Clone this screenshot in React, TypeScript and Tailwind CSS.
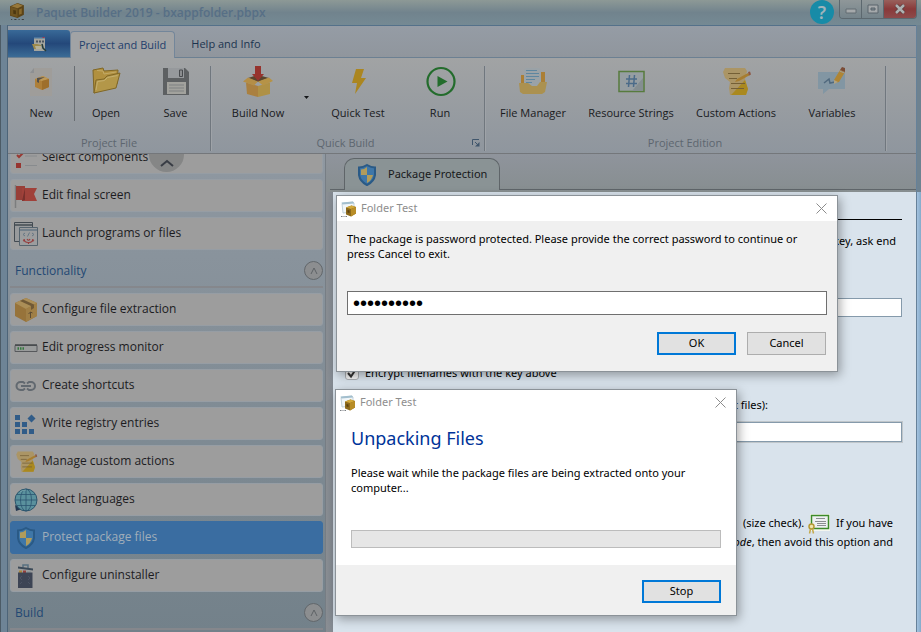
import type { ReactNode } from "react";
import { useState } from "react";

interface IconProps {
  className?: string;
}

function BoxLogo({ className }: IconProps) {
  return (
    <svg viewBox="0 0 16 16" className={className} aria-hidden="true">
      <path d="m1 3 7-3 6 2v9l-6 3-7-2z" fill="#5c4417" />
      <path d="M1.500 3.500 8 5.500v8l-6.500-2z" fill="#6f5420" />
      <path d="m2 3 6-2.500L13 2.500 8 5z" fill="#97783a" />
      <path d="M4 6.500 6.500 7v3.500L4 10z" fill="#4c3812" />
      <path d="M9.500 6 12 5v5l-2.500 1z" fill="#8a6a2c" />
      <path d="M2 15.500h1M5 15.500h2M9 15.500h1M12 15.500h2" stroke="#3c3f42" />
    </svg>
  );
}

function SetupLogo({ className }: IconProps) {
  return (
    <svg viewBox="0 0 16 16" className={className} aria-hidden="true">
      <path d="M1 2.500 12 1l1 1v9L2 12z" fill="#f1f6f9" stroke="#b4c6d0" strokeWidth=".8" />
      <path d="M.5 1.500 12 .6l1 1.800L1.500 3.500z" fill="#a3bfce" />
      <path d="m5 6.500 5.500-2 4.500 1.500v6.500l-5 3-5-2z" fill="#8d6a1c" />
      <path d="m5 6.500 5.500-2L15 6l-5 2z" fill="#d2a83a" />
      <path d="M10 8 15 6v6.500l-5 3z" fill="#b88d27" />
      <path d="m6.500 9 2 .5v2.500l-2-.5z" fill="#5c4210" />
      <path d="M0 15.500h1.500M2.500 15.500h1M4.500 15.500h1.500" stroke="#7a7f84" />
    </svg>
  );
}

function AppMenuIcon() {
  return (
    <svg viewBox="0 0 16 16" className="h-4 w-4" aria-hidden="true">
      <path d="M3 1h11v14H3z" fill="#a5a59e" />
      <path d="M3 1h11v1.500H3z" fill="#47729c" />
      <path d="M11.500 1.500h2" stroke="#a34" />
      <path d="M5 4.500h2v2H5zM8 4.500h2v2H8zM11 4.500h2v2h-2z" fill="#4b5560" />
      <path d="M1 8h5l4 1v4H3z" fill="#9d8a4b" />
      <path d="M4 10h6v3H5z" fill="#b5b096" />
      <path d="m11 8 1 4 3 3" stroke="#243b38" strokeWidth="1.500" fill="none" />
    </svg>
  );
}

function NewIcon() {
  return (
    <svg viewBox="0 0 32 32" className="h-8 w-8" aria-hidden="true">
      <path d="M9 2h18v28H5V7z" fill="#9f9d9a" />
      <path d="M5 7l4-5v5z" fill="#8d8f92" />
      <path d="m10 13 8-3 6 3v8l-7 3-7-3z" fill="#ae7f38" />
      <path d="m10 13 8-3 6 3-7 2z" fill="#bd9857" />
      <path d="m17 15 7-2v8l-7 3z" fill="#9e6f2c" />
      <path d="m12 12 8-1-6 3v3l-2-1z" fill="#55504a" />
    </svg>
  );
}

function OpenIcon() {
  return (
    <svg viewBox="0 0 32 32" className="h-8 w-8" aria-hidden="true">
      <path d="M3 4 13 2l1 3 14-1-1 14L4 27z" fill="#b1903f" stroke="#806726" />
      <path d="M7 4.500 13 5l1 3 12-2" stroke="#c3aa66" fill="none" />
      <path d="M4 27 6 14l8-1 3-3 13-3-4 15z" fill="#b39749" stroke="#806726" />
      <path d="M6 24 7.500 15.500l7-1 3-3 10-2" stroke="#c5af6e" fill="none" />
    </svg>
  );
}

function SaveIcon() {
  return (
    <svg viewBox="0 0 32 32" className="h-8 w-8" aria-hidden="true">
      <path d="M3 2h22l4 4v23H3z" fill="#5d6062" />
      <path d="M8 2h16v10H8z" fill="#96999c" />
      <path d="M19.500 4h3v6.500h-3z" fill="#8a8c8e" stroke="#484b4e" />
      <path d="M7 16h19v12H7z" fill="#a2a29d" />
      <path d="M9 19h15M9 22h15M9 25h15" stroke="#7f8182" />
    </svg>
  );
}

function BuildIcon() {
  return (
    <svg viewBox="0 0 32 32" className="h-8 w-8" aria-hidden="true">
      <path d="m6 12 10-3 11 3-11 4z" fill="#59452d" />
      <path d="M4 16.500 16 20v11L5 28z" fill="#aa8040" />
      <path d="m16 20 12-3.500V28l-12 3z" fill="#af9146" />
      <path d="m6 11.500-5 4 11 4 4-4z" fill="#b48e47" />
      <path d="m27 11.500 4 3.500-10 4.500-5-4z" fill="#b69347" />
      <path d="M13 0h6v8h3l-6 7-6-7h3z" fill="#96332d" />
    </svg>
  );
}

function BoltIcon() {
  return (
    <svg viewBox="0 0 32 32" className="h-8 w-8" aria-hidden="true">
      <path d="M14 3h8l-3 9h5L13 28l2-11H10z" fill="#ab8620" />
    </svg>
  );
}

function RunIcon() {
  return (
    <svg viewBox="0 0 32 32" className="h-8 w-8" aria-hidden="true">
      <circle cx="17" cy="15.500" r="13.500" fill="none" stroke="#236c2c" strokeWidth="2.200" />
      <path d="m13.500 10 10 5.500-10 5.500z" fill="#236c2c" />
    </svg>
  );
}

function FileManagerIcon() {
  return (
    <svg viewBox="0 0 32 32" className="h-8 w-8" aria-hidden="true">
      <path d="M4 9h5v10H4zM24 6h4v12h-4z" fill="#ab7f36" />
      <path d="M9 2h13l2 2v16H7V4z" fill="#9aa2a7" />
      <path d="M9 4.500h11M9 7.500h13M9 10.500h13M9 13.500h9M9 16.500h6" stroke="#5d86a0" />
      <path d="M2 17h9l4 3h5l3-4h7l-2 10-3 2H6l-3-2z" fill="#ab9150" />
    </svg>
  );
}

function StringsIcon() {
  return (
    <svg viewBox="0 0 32 32" className="h-8 w-8" aria-hidden="true">
      <path d="M4 5.500h25v20H4z" fill="#969ea2" stroke="#577b3e" strokeWidth="1.500" />
      <path d="M28 12v13H17z" fill="#858e91" />
      <path d="m14.500 9-1 12M19.500 9l-1 12M11 13h11M11 17.500h11" stroke="#4b6b89" strokeWidth="1.500" />
    </svg>
  );
}

function ScrollIcon({ className = "h-8 w-8" }: IconProps) {
  return (
    <svg viewBox="0 0 32 32" className={className} aria-hidden="true">
      <path d="M5 2h20l2 3-2 8 3 10-2 6H10l-1-7 1-6-5-4-2-6z" fill="#ab9565" />
      <path d="m25 14 3 9-2 6H11l2-2z" fill="#aa891f" />
      <path d="M8 7.500h12M9 12.500h8M11 17.500h14M11 22.500h13" stroke="#745f35" />
      <path d="m15 16 2-3 11-6 2 2-11 6z" fill="#a77d30" />
      <path d="m28 6 2-.5 1 3-2 1z" fill="#8d5642" />
    </svg>
  );
}

function VariablesIcon() {
  return (
    <svg viewBox="0 0 32 32" className="h-8 w-8" aria-hidden="true">
      <path d="M2 6h27v17H13l-6 5v-5H2z" fill="#8296a3" />
      <path d="m8 17 5-4 1 4 5-1" stroke="#50697e" strokeWidth="1.500" fill="none" />
      <path d="m18 14 6-10 5 2-6 10-5 1z" fill="#ae8535" />
      <path d="m24 4 2-3 3 1v4z" fill="#7b4c36" />
      <path d="m23.500 5 5 2" stroke="#9e9e9d" />
      <path d="m18 14 4 2-4 2z" fill="#b0a383" />
    </svg>
  );
}

function ComponentsIcon() {
  return (
    <svg viewBox="0 0 24 24" className="h-6 w-6" aria-hidden="true">
      <path d="m3 9 2 2 4-4" stroke="#993832" strokeWidth="2" fill="none" />
      <path d="M2 17h5v5H2z" fill="#973530" />
      <path d="M11 10h12M11 19.500h12" stroke="#888b8e" />
    </svg>
  );
}

function FlagIcon() {
  return (
    <svg viewBox="0 0 24 24" className="h-6 w-6" aria-hidden="true">
      <path d="M1.500 1v23" stroke="#7c7d7e" strokeWidth="1.500" />
      <path d="M2 2h9v14H2z" fill="#983f38" />
      <path d="M8 4h15l-3 6 3 7H8z" fill="#a0413a" />
      <path d="m8 17 3-1V4z" fill="#79302c" />
    </svg>
  );
}

function LaunchIcon() {
  return (
    <svg viewBox="0 0 24 24" className="h-6 w-6" aria-hidden="true">
      <path d="M.5.5h18v19H.5z" fill="#989a9c" stroke="#434b52" />
      <path d="M1 3h17" stroke="#434b52" strokeWidth="1.500" />
      <path d="M5.500 5.500h18v18h-18z" fill="#9c9d9e" stroke="#56646e" />
      <path d="M6 8h17" stroke="#667784" strokeWidth="1.500" />
      <path d="m11 11-2 1.500 2 1.500m7-3 2 1.500-2 1.500m-4.500.5 2-4" stroke="#667784" fill="none" />
      <path d="M10 17q0 3.500 4.500 3.500T19 17m-6 0q1.500 2.500 3 0M9 19l2-1m9 1-2-1m-3.500 4v-2" stroke="#963d3d" strokeWidth="1.200" fill="none" />
    </svg>
  );
}

function PackageIcon() {
  return (
    <svg viewBox="0 0 24 24" className="h-6 w-6" aria-hidden="true">
      <path d="m1 5 11-5 11 5v13l-11 6-11-6z" fill="#97733a" />
      <path d="m1 5 11-5 11 5-11 6z" fill="#ab8e57" />
      <path d="m12 11 11-6v13l-11 6z" fill="#a07f46" />
      <path d="m6 3 11 5v4l3-2V6.500L9 1.500z" fill="#705936" />
      <path d="M16.500 20v-6m-2 2 2-2 2 1" stroke="#5c4c34" fill="none" />
    </svg>
  );
}

function ProgressIcon() {
  return (
    <svg viewBox="0 0 24 24" className="h-6 w-6" aria-hidden="true">
      <path d="M1 9.500h22v6H1z" fill="#999b9b" stroke="#57595c" />
      <path d="M1 9h22" stroke="#45484b" strokeWidth="1.500" />
      <path d="M3.500 12.500h1.500m1 0h1.500m1 0H10" stroke="#34793e" strokeWidth="2.500" />
    </svg>
  );
}

function LinkIcon() {
  return (
    <svg viewBox="0 0 24 24" className="h-6 w-6" aria-hidden="true">
      <path
        d="M11 9.500 9 8H6.500a4 4 0 0 0 0 8H9l2-1.500M13 9.500 15 8h2a4 4 0 0 1 0 8h-2l-2-1.500"
        fill="none"
        stroke="#626970"
        strokeWidth="2"
      />
      <path d="M7 12h10" stroke="#626970" strokeWidth="2" />
    </svg>
  );
}

function RegistryIcon() {
  return (
    <svg viewBox="0 0 24 24" className="h-6 w-6" aria-hidden="true">
      <path
        d="M1 3h5v5H1zM1 10h5v5H1zM8 10h5v5H8zM1 17h5v5H1zM8 17h5v5H8zM15 17h5v5h-5zM17.500 2.500l4 4-4 4-4-4z"
        fill="#315c88"
      />
    </svg>
  );
}

function GlobeIcon() {
  return (
    <svg viewBox="0 0 24 24" className="h-6 w-6" aria-hidden="true">
      <path d="m1 17 1 6 6-2z" fill="#23364f" />
      <circle cx="12" cy="12" r="11" fill="#5a919d" stroke="#2c566d" />
      <ellipse cx="12" cy="12" rx="5.500" ry="11" fill="none" stroke="#2b5470" strokeWidth=".8" />
      <path d="M1 12h22M12 1v22M3 6.500h18M3 17.500h18" stroke="#2b5470" strokeWidth=".8" />
      <path d="M6 4q3-2 6-2" stroke="#73a0a8" fill="none" />
    </svg>
  );
}

function ShieldIcon({ className = "h-6 w-6" }: IconProps) {
  return (
    <svg viewBox="0 0 24 24" className={className} aria-hidden="true">
      <path
        d="M12 2q4 2.500 8 2.500V12q-1 6.500-8 10Q5 18.500 4 12V4.500Q8 4.500 12 2z"
        fill="#3f77a8"
        stroke="#2a5a86"
        strokeWidth="2"
      />
      <path d="M12 4v8H6V6.500Q9 6.500 12 4zM12 12h6q-1 5-6 8z" fill="#b09c5c" />
    </svg>
  );
}

function TrashIcon() {
  return (
    <svg viewBox="0 0 24 24" className="h-6 w-6" aria-hidden="true">
      <path d="M9 3.500V1h5v3" stroke="#587080" strokeWidth="1.500" fill="none" />
      <path d="m4 2.500 15 2v2l-15-2z" fill="#3c4a58" />
      <path d="M5 6.500h3V9H5z" fill="#ab873c" />
      <path d="M9 6.500h3V9H9z" fill="#943e3c" />
      <path d="M13 7h4v2h-4z" fill="#8e9598" />
      <path d="M4 8.500h14.500V24H4z" fill="#3d4454" />
      <path d="m8 12-2 2 2 2m6-4 2 2-2 2m-6 2-2 2m8-2 2 2" stroke="#4c5363" fill="none" />
    </svg>
  );
}

function CertificateIcon() {
  return (
    <svg viewBox="0 0 24 20" className="-my-1 mx-px inline h-5 w-6 align-middle" aria-hidden="true">
      <path d="M2 0h20v17H2z" fill="#f4f6ef" />
      <path d="M3.500 1.500h17v13h-17z" fill="#eef0f2" stroke="#3c8a2a" strokeWidth="1.500" />
      <path d="M8 4.500h9M7 7.500h11M9 9.500h9M9 11.500h9" stroke="#8a8d90" />
      <circle cx="3.500" cy="12.500" r="2.500" fill="#f0e6b0" stroke="#b69a35" strokeWidth="1.500" />
      <path d="m2.500 15-1 4.500m3-4.500 1 4.500" stroke="#c4a94c" strokeWidth="1.500" />
    </svg>
  );
}

interface RibbonButtonProps {
  label: string;
  icon: ReactNode;
  className: string;
}

function RibbonButton({ label, icon, className }: RibbonButtonProps) {
  return (
    <button className={`flex flex-col items-center gap-[7px] whitespace-nowrap ${className}`}>
      {icon}
      <span className="leading-4">{label}</span>
    </button>
  );
}

interface RibbonGroupProps {
  title: string;
  launcher?: boolean;
  children: ReactNode;
}

function RibbonGroup({ title, launcher, children }: RibbonGroupProps) {
  return (
    <section className="mt-2 flex flex-col justify-between border-r border-[#70777e] shadow-[1px_0_#9fa3a8]">
      <div className="flex">{children}</div>
      <div className={`relative text-center leading-4 text-[#5d666f] ${launcher ? "pr-1" : ""}`}>
        {title}
        {launcher && (
          <button aria-label={`${title} options`} className="absolute right-1 bottom-1">
            <svg viewBox="0 0 8 8" className="h-2 w-2">
              <path d="M.5 6V.5H7M3 3l3 3" stroke="#40566c" fill="none" />
              <path d="M7.500 3v4.500H3z" fill="#40566c" />
            </svg>
          </button>
        )}
      </div>
    </section>
  );
}

interface NavItemProps {
  label: string;
  icon: ReactNode;
  active?: boolean;
}

function NavItem({ label, icon, active }: NavItemProps) {
  return (
    <li>
      <button
        className={`flex h-[33px] w-full items-center gap-1 rounded-[3px] border px-[3px] text-left ${
          active
            ? "border-[#3a6da1] bg-[#3a6da1] text-[#a0adb9]"
            : "border-[#969da4] bg-[#9d9d9d] text-[#1c1c1f]"
        }`}
      >
        {icon}
        <span className="pb-px">{label}</span>
      </button>
    </li>
  );
}

function NavHeading({ label }: { label: string }) {
  return (
    <div className="flex h-[33px] items-center justify-between border-b-2 border-[#85878c] pl-[5px]">
      <h2 className="text-[#234873]">{label}</h2>
      <button
        aria-label={`Collapse ${label}`}
        className="flex h-[19px] w-[19px] items-center justify-center rounded-full border border-[#62676b] bg-[#8c8e90]"
      >
        <svg viewBox="0 0 8 8" className="h-2 w-2">
          <path d="m1 7 3-6 3 6" stroke="#5e6266" fill="none" />
        </svg>
      </button>
    </div>
  );
}

const screenItems = [
  { label: "Select components", icon: <ComponentsIcon /> },
  { label: "Edit final screen", icon: <FlagIcon /> },
  { label: "Launch programs or files", icon: <LaunchIcon /> },
];

const functionalityItems = [
  { label: "Configure file extraction", icon: <PackageIcon /> },
  { label: "Edit progress monitor", icon: <ProgressIcon /> },
  { label: "Create shortcuts", icon: <LinkIcon /> },
  { label: "Write registry entries", icon: <RegistryIcon /> },
  { label: "Manage custom actions", icon: <ScrollIcon className="h-6 w-6" /> },
  { label: "Select languages", icon: <GlobeIcon /> },
  { label: "Protect package files", icon: <ShieldIcon />, active: true },
  { label: "Configure uninstaller", icon: <TrashIcon /> },
];

function Sidebar() {
  return (
    <nav className="relative w-[318px] shrink-0 overflow-hidden border-r border-[#777e85] bg-linear-to-b from-[#8f98a1] to-[#73818a] px-[2px] text-[12px]">
      <div className="-mt-[13px] flex flex-col gap-[5px]">
        <ul className="flex flex-col gap-[5px]">
          {screenItems.map((item) => (
            <NavItem key={item.label} {...item} />
          ))}
        </ul>
        <NavHeading label="Functionality" />
        <ul className="flex flex-col gap-[5px]">
          {functionalityItems.map((item) => (
            <NavItem key={item.label} {...item} />
          ))}
        </ul>
        <NavHeading label="Build" />
      </div>
      <button
        aria-label="Scroll up"
        className="absolute -top-[17px] left-[141px] flex h-[35px] w-[35px] items-end justify-center rounded-full bg-[#858686] pb-[5px]"
      >
        <svg viewBox="0 0 14 8" className="h-2 w-[14px]">
          <path d="m1 7 6-5 6 5" stroke="#393d45" strokeWidth="2" fill="none" />
        </svg>
      </button>
    </nav>
  );
}

interface DialogProps {
  label: string;
  className: string;
  children: ReactNode;
}

function Dialog({ label, className, children }: DialogProps) {
  return (
    <section
      role="dialog"
      aria-label={label}
      className={`absolute flex flex-col border border-[#8b9298] bg-white text-black shadow-[2px_3px_10px_rgba(0,0,0,0.35)] ${className}`}
    >
      <header className="flex h-[25px] shrink-0 items-center bg-white pr-[10px] pl-1">
        <SetupLogo className="mr-1 h-4 w-4" />
        <span className="text-[#8e8e8e]">Folder Test</span>
        <button aria-label="Close" className="ml-auto">
          <svg viewBox="0 0 11 11" className="h-[11px] w-[11px]">
            <path d="m.5.5 10 10m0-10-10 10" stroke="#8c8c8c" fill="none" />
          </svg>
        </button>
      </header>
      {children}
    </section>
  );
}

function DialogButton({ label, primary }: { label: string; primary?: boolean }) {
  return (
    <button
      className={`h-[23px] w-[79px] bg-[#e1e1e1] ${
        primary ? "border-2 border-[#0078d7]" : "border border-[#adadad]"
      }`}
    >
      {label}
    </button>
  );
}

function PasswordDialog() {
  const [password, setPassword] = useState("packetpass");

  return (
    <Dialog label="Password" className="top-[3px] left-[3px] h-[177px] w-[502px]">
      <form className="flex grow flex-col bg-[#f0f0f0] px-[10px] pt-[10px]" onSubmit={(e) => e.preventDefault()}>
        <label htmlFor="password" className="h-[60px] leading-[15px]">
          The package is password protected. Please provide the correct password to continue or
          <br />
          press Cancel to exit.
        </label>
        <input
          id="password"
          type="password"
          value={password}
          onChange={(e) => setPassword(e.target.value)}
          className="h-6 w-full border border-[#6f6f6f] bg-white px-[5px] font-['Liberation_Sans'] text-[20px] outline-none"
        />
        <div className="mt-[17px] flex justify-end gap-[11px] pr-px">
          <DialogButton label="OK" primary />
          <DialogButton label="Cancel" />
        </div>
      </form>
    </Dialog>
  );
}

function ProgressDialog() {
  return (
    <Dialog label="Unpacking" className="top-[197px] left-[2px] h-[227px] w-[402px]">
      <div className="grow px-[15px] pt-2">
        <h2 className="text-[18px] leading-[30px] text-[#003399]">Unpacking Files</h2>
        <p className="mt-3 leading-[15px]">
          Please wait while the package files are being extracted onto your
          <br />
          computer...
        </p>
        <div
          role="progressbar"
          aria-label="Extraction progress"
          className="mt-[35px] h-[18px] border border-[#bcbcbc] bg-[#e6e6e6]"
        />
      </div>
      <footer className="flex h-[50px] shrink-0 items-center justify-end bg-[#f0f0f0] px-[15px] pt-[2px]">
        <DialogButton label="Stop" primary />
      </footer>
    </Dialog>
  );
}

function ProtectionPanel() {
  return (
    <main className="relative grow bg-[#d9e3ec] pr-[14px] pl-3 font-['Noto_Sans','Open_Sans',sans-serif] text-black">
      <div className="pt-[27px]">
        <hr className="border-black" />
      </div>
      <label htmlFor="unpack-key" className="mt-[13px] block pr-[6px] text-right leading-4">
        key, ask end
      </label>
      <input id="unpack-key" className="mt-[49px] block h-[19px] w-full border border-[#859aab] bg-white" />
      <label className="mt-12 flex items-center gap-[6px] leading-4">
        <span className="grid h-[14px] w-[14px]">
          <input
            type="checkbox"
            defaultChecked
            className="peer col-start-1 row-start-1 appearance-none rounded-[3px] border border-[#a9adb1] bg-[#f3f3f3]"
          />
          <svg viewBox="0 0 14 14" className="col-start-1 row-start-1 hidden peer-checked:block" aria-hidden="true">
            <path d="m3 7 3 3.500L11 3" fill="none" stroke="#333" strokeWidth="2" />
          </svg>
        </span>
        Encrypt filenames with the key above
      </label>
      <label htmlFor="file-list" className="mt-4 block pr-[134px] text-right leading-4">
        list files):
      </label>
      <input id="file-list" className="mt-[9px] block h-5 w-full border border-[#859aab] bg-white shadow-[0_0_0_1px_#c0c6ca]" />
      <p className="mt-[71px] pr-[9px] text-right leading-[19px]">
        (size check). <CertificateIcon /> If you have
        <br />
        <em>code</em>, then avoid this option and
      </p>
      <PasswordDialog />
      <ProgressDialog />
    </main>
  );
}

function TitleBar() {
  return (
    <header className="flex h-[25px] shrink-0 items-start bg-linear-to-b from-[#8d9996] via-[#71838d] to-[#758a94] pl-[9px]">
      <BoxLogo className="mt-[3px] h-[17px] w-[17px]" />
      <h1 className="ml-[10px] text-[12px] leading-[25px] font-semibold text-[#576f86]">
        Paquet Builder 2019 - bxappfolder.pbpx
      </h1>
      <button
        aria-label="Help"
        className="ml-auto flex h-6 w-6 items-center justify-center rounded-full bg-[#178ba7] font-['Noto_Sans'] text-[18px] leading-6 font-semibold text-[#a0b4bb]"
      >
        ?
      </button>
      <div className="mr-1 ml-[5px] flex h-[19px] overflow-hidden rounded-b-[4px] border border-t-0 border-[#5c686f]">
        <button aria-label="Minimize" className="flex w-[22px] items-center justify-center border-r border-[#5c686f] bg-linear-to-b from-[#8f9799] to-[#75848b]">
          <svg viewBox="0 0 12 6" className="mt-1 h-[6px] w-3">
            <path d="M1 1h10v4H1z" fill="#a5a9ab" stroke="#626c73" />
          </svg>
        </button>
        <button aria-label="Maximize" className="flex w-[22px] items-center justify-center border-r border-[#5c686f] bg-linear-to-b from-[#8f9799] to-[#75848b]">
          <svg viewBox="0 0 12 10" className="h-[10px] w-3">
            <path d="M1 1h10v8H1z" fill="#a5a9ab" stroke="#5b656c" />
            <path d="M4 4h4v2H4z" fill="#7d898f" stroke="#5b656c" />
          </svg>
        </button>
        <button aria-label="Close window" className="flex w-8 items-center justify-center bg-linear-to-b from-[#98605c] via-[#89393a] to-[#8d4a4b]">
          <svg viewBox="0 0 12 10" className="h-[10px] w-3">
            <path d="m2 1 8 8m0-8-8 8" stroke="#5c3839" strokeWidth="4" />
            <path d="m2 1 8 8m0-8-8 8" stroke="#adb0b1" strokeWidth="2.500" />
          </svg>
        </button>
      </div>
    </header>
  );
}

function Ribbon() {
  return (
    <div className="shrink-0">
      <div role="tablist" className="flex h-8 items-end border-b border-[#6c8092] bg-linear-to-b from-[#959ca5] to-[#90969d]">
        <button
          aria-label="Application menu"
          className="flex h-[27px] w-[62px] items-center justify-center rounded-tr-[3px] bg-linear-to-b from-[#396a98] via-[#24487a] to-[#3c6c96]"
        >
          <AppMenuIcon />
        </button>
        <button
          role="tab"
          aria-selected="true"
          className="-mb-px h-[27px] rounded-t-[4px] border border-b-0 border-[#73869a] bg-[#a1a3a5] px-2 text-[#1f3f6c]"
        >
          Project and Build
        </button>
        <button role="tab" aria-selected="false" className="h-[26px] px-4 text-[#1c344f]">
          Help and Info
        </button>
      </div>
      <div className="flex h-[96px] overflow-hidden border-b border-[#74777b] bg-linear-to-b from-[#a1a3a4] to-[#8f969e] pb-[2px] text-[#191a1d]">
        <RibbonGroup title="Project File">
          <RibbonButton label="New" icon={<NewIcon />} className="w-[67px] border-r border-[#686d72]" />
          <RibbonButton label="Open" icon={<OpenIcon />} className="w-[62px]" />
          <RibbonButton label="Save" icon={<SaveIcon />} className="ml-1 w-[69px]" />
        </RibbonGroup>
        <RibbonGroup title="Quick Build" launcher>
          <RibbonButton label="Build Now" icon={<BuildIcon />} className="ml-1 w-[86px]" />
          <button aria-label="Build options" className="flex w-[10px] items-center justify-center pt-2">
            <svg viewBox="0 0 5 3" className="h-[3px] w-[5px]">
              <path d="M0 0h5L2.500 3z" fill="#15171a" />
            </svg>
          </button>
          <RibbonButton label="Quick Test" icon={<BoltIcon />} className="w-[94px]" />
          <RibbonButton label="Run" icon={<RunIcon />} className="mr-[9px] w-[70px]" />
        </RibbonGroup>
        <RibbonGroup title="Project Edition">
          <RibbonButton label="File Manager" icon={<FileManagerIcon />} className="w-[96px]" />
          <RibbonButton label="Resource Strings" icon={<StringsIcon />} className="w-[100px]" />
          <RibbonButton label="Custom Actions" icon={<ScrollIcon />} className="w-[110px]" />
          <RibbonButton label="Variables" icon={<VariablesIcon />} className="mr-3 w-[82px]" />
        </RibbonGroup>
      </div>
    </div>
  );
}

export default function App() {
  return (
    <div className="flex h-screen flex-col overflow-hidden bg-[#6d828f] font-['Open_Sans','Noto_Sans',sans-serif] text-[11px]">
      <TitleBar />
      <div className="flex min-h-0 grow">
        <div className="w-2 shrink-0 border-r border-l border-r-[#4d6478] border-l-[#4c5b66] bg-[#6e8496]" />
        <div className="flex min-w-0 grow flex-col border-t border-[#54718a]">
          <Ribbon />
          <div className="flex min-h-0 grow">
            <Sidebar />
            <div className="flex min-w-0 grow flex-col bg-[#8c9199]">
              <div className="flex h-[38px] shrink-0 flex-col bg-linear-to-b from-[#8f949c] to-[#878e90]">
                <div className="ml-1 flex h-9 items-end border-b border-[#5f6569]">
                  <button
                    role="tab"
                    aria-selected="true"
                    className="-mb-px ml-[14px] flex h-8 items-center gap-[9px] rounded-t-[10px] border border-b-0 border-[#5f6569] bg-[#8a9395] pr-3 pl-[10px] font-['Noto_Sans','Open_Sans',sans-serif] text-[#17191b]"
                  >
                    <ShieldIcon />
                    Package Protection
                  </button>
                </div>
              </div>
              <div className="flex min-h-0 grow">
                <div className="w-[7px] shrink-0 bg-linear-to-r from-[#8a8e93] to-[#828991]" />
                <ProtectionPanel />
              </div>
            </div>
          </div>
        </div>
        <div className="flex w-[5px] shrink-0 flex-col border-l border-[#668199]">
          <div className="h-[167px] bg-[#6e8290]" />
          <div className="grow bg-linear-to-r from-[#a3c2df] to-[#86abca]" />
        </div>
      </div>
    </div>
  );
}
